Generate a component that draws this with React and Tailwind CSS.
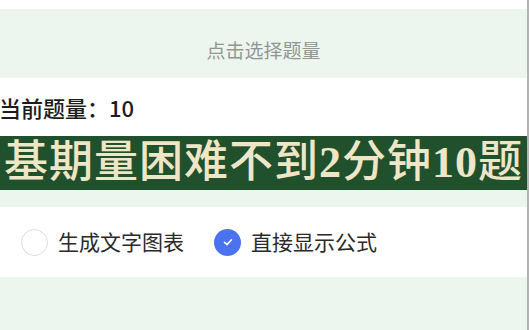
import React from 'react';

const sans = { fontFamily: '"Noto Sans CJK SC", "Noto Sans", sans-serif' };

export default function App() {
  return (
    <div
      className="w-[529px] h-[330px] overflow-hidden bg-[#edf5ef] border-r-2 border-[#b3b3b3] flex flex-col"
      style={sans}
    >
      {/* top strip */}
      <div className="h-[9px] bg-white shrink-0" />

      {/* picker header */}
      <div className="h-[69px] shrink-0 bg-[#edf5ef] flex justify-center pt-[30px]">
        <span className="text-[19px] leading-[22px] text-[#929593]">点击选择题量</span>
      </div>

      {/* current count */}
      <div className="h-[58px] shrink-0 bg-white flex items-center">
        <span className="-ml-[1px] text-[22px] font-medium text-[#1c1c1c]">当前题量：10</span>
      </div>

      {/* banner */}
      <div className="h-[54px] shrink-0 bg-[#21502d] flex items-center pl-[4px]">
        <span
          className="text-[44px] leading-none font-medium text-[#efe5c7] tracking-[1px] whitespace-nowrap"
          style={{ fontFamily: '"Liberation Serif", "Noto Sans CJK SC", serif' }}
        >
          基期量困难不到<span className="font-bold">2</span>分钟<span className="font-bold">10</span>题
        </span>
      </div>

      <div className="h-[17px] shrink-0" />

      {/* options */}
      <div className="h-[70px] shrink-0 bg-white flex items-center pl-[21px]">
        <div className="flex items-center gap-[10px]">
          <span className="w-[27px] h-[27px] rounded-full border-[1.5px] border-[#dcdcdc]" />
          <span className="text-[21px] text-[#2a2a2a]">生成文字图表</span>
        </div>
        <div className="flex items-center gap-[10px] ml-[30px]">
          <span className="w-[27px] h-[27px] rounded-full bg-[#4b73ef] flex items-center justify-center">
            <svg width="12" height="12" viewBox="0 0 12 12" fill="none">
              <path d="M2.5 6.3 L5 8.6 L9.5 3.8" stroke="white" strokeWidth="1.6" strokeLinecap="round" strokeLinejoin="round" />
            </svg>
          </span>
          <span className="text-[21px] text-[#2a2a2a]">直接显示公式</span>
        </div>
      </div>

      <div className="flex-1" />
    </div>
  );
}
